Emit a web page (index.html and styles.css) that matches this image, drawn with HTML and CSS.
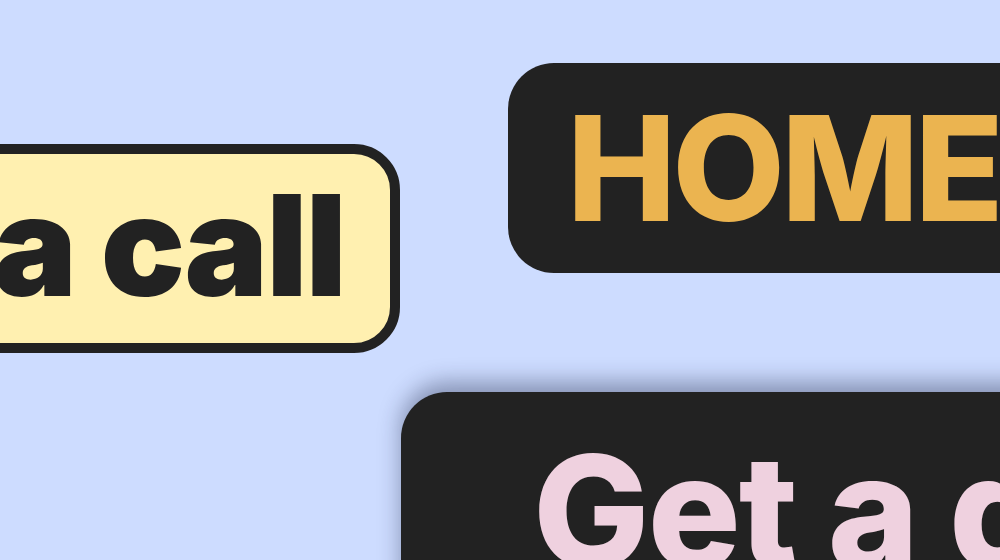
FILE: index.html
```html
<!DOCTYPE html>
<html lang="en">
<head>
<meta charset="utf-8">
<title>Buttons</title>
<link rel="stylesheet" href="styles.css">
</head>
<body>
<main class="canvas">
  <div class="row row-top">
    <a class="btn btn-call" href="#">a call</a>
    <a class="btn btn-home" href="#">HOME</a>
  </div>
  <div class="row row-bottom">
    <a class="btn btn-quote" href="#">Get a quote</a>
  </div>
</main>
</body>
</html>
```
FILE: styles.css
```css
html, body {
  margin: 0;
  padding: 0;
  background: #cddcff;
}
.canvas {
  width: 1000px;
  height: 560px;
  overflow: hidden;
  display: flex;
  flex-direction: column;
  background: #cddcff;
  font-family: Inter, "Liberation Sans", sans-serif;
}
.row {
  display: flex;
  align-items: flex-start;
  flex: none;
}
.btn {
  flex: none;
  display: flex;
  box-sizing: border-box;
  white-space: nowrap;
  text-decoration: none;
  line-height: 1;
  border-radius: 46px;
}
.btn-call {
  width: 460px;
  height: 209px;
  margin-left: -60px;
  margin-top: 144px;
  justify-content: flex-end;
  align-items: flex-start;
  padding: 21px 45px 0 0;
  background: #fff0b0;
  border: 10px solid #222222;
  color: #222222;
  font-size: 140px;
  font-weight: 900;
  letter-spacing: -2px;
}
.btn-home {
  height: 210px;
  margin-left: 108px;
  margin-top: 63px;
  align-items: center;
  padding: 0 60px 0 59px;
  background: #222222;
  color: #ebb450;
  font-size: 146px;
  font-weight: 800;
  letter-spacing: -4px;
}
.btn-quote {
  height: 300px;
  margin-left: 401px;
  margin-top: 39px;
  align-items: flex-start;
  padding: 41px 60px 0 132px;
  background: #222222;
  color: #efd1df;
  font-size: 155px;
  font-weight: 800;
  letter-spacing: -2px;
  box-shadow: 0 -10px 22px rgba(20, 30, 60, 0.38);
}
```
